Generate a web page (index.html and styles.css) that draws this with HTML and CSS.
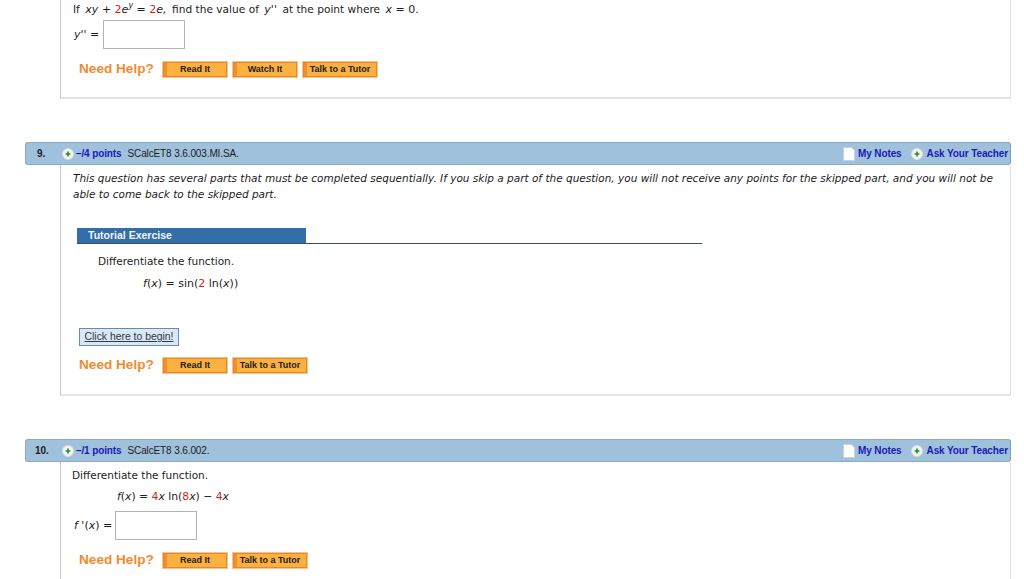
FILE: index.html
```html
<!doctype html>
<html lang="en-us">
  <head>
    <meta charset="utf-8">
    <title>Assignment</title>
    <link rel="stylesheet" href="styles.css">
  </head>
  <body>
    <div class="page">

      <div class="qbody first">
        <p class="line"><span class="gap if">If</span> <i>xy</i> + <b class="red">2</b><i>e<sup>y</sup></i> = <b class="red">2</b><i>e,</i> <span class="gap">find the value of</span> <i>y''</i> <span class="gap">at the point where</span> <i>x</i> = 0.</p>
        <div class="answer a-first"><span class="lbl"><i>y''</i> =</span><span class="box"></span></div>
        <div class="help">
          <span class="need">Need Help?</span>
          <a class="btn w66">Read It</a>
          <a class="btn w66">Watch It</a>
          <a class="btn w76">Talk to a Tutor</a>
        </div>
      </div>

      <div class="qhead q9">
        <span class="num">9.</span>
        <svg class="plus" width="14" height="14" viewBox="0 0 14 14"><circle cx="7" cy="7" r="5.5" fill="#f4f4f0" stroke="#d5dde0"/><path d="M4.6 7h4.8M7 4.6v4.8" stroke="#2c8a2c" stroke-width="1.6"/></svg>
        <span class="pts">–/4 points</span>
        <span class="code">SCalcET8 3.6.003.MI.SA.</span>
        <span class="right">
          <svg class="note" width="12" height="14" viewBox="0 0 12 14"><path d="M.5.5h8l3 3v10H.5z" fill="#fff" stroke="#c6d3de"/></svg>
          <span class="link">My Notes</span>
          <svg class="plus p2" width="14" height="14" viewBox="0 0 14 14"><circle cx="7" cy="7" r="5.5" fill="#f4f4f0" stroke="#d5dde0"/><path d="M4.6 7h4.8M7 4.6v4.8" stroke="#2c8a2c" stroke-width="1.6"/></svg>
          <span class="link">Ask Your Teacher</span>
        </span>
      </div>
      <div class="qbody second">
        <p class="intro"><i>This question has several parts that must be completed sequentially. If you skip a part of the question, you will not receive any points for the skipped part, and you will not be able to come back to the skipped part.</i></p>
        <div class="tut"><span class="tut-title">Tutorial Exercise</span></div>
        <p class="diff">Differentiate the function.</p>
        <p class="fn"><i>f</i>(<i>x</i>) = sin(<span class="red">2</span> ln(<i>x</i>))</p>
        <a class="begin">Click here to begin!</a>
        <div class="help h9">
          <span class="need">Need Help?</span>
          <a class="btn w66">Read It</a>
          <a class="btn w76">Talk to a Tutor</a>
        </div>
      </div>

      <div class="qhead q10">
        <span class="num">10.</span>
        <svg class="plus" width="14" height="14" viewBox="0 0 14 14"><circle cx="7" cy="7" r="5.5" fill="#f4f4f0" stroke="#d5dde0"/><path d="M4.6 7h4.8M7 4.6v4.8" stroke="#2c8a2c" stroke-width="1.6"/></svg>
        <span class="pts">–/1 points</span>
        <span class="code">SCalcET8 3.6.002.</span>
        <span class="right">
          <svg class="note" width="12" height="14" viewBox="0 0 12 14"><path d="M.5.5h8l3 3v10H.5z" fill="#fff" stroke="#c6d3de"/></svg>
          <span class="link">My Notes</span>
          <svg class="plus p2" width="14" height="14" viewBox="0 0 14 14"><circle cx="7" cy="7" r="5.5" fill="#f4f4f0" stroke="#d5dde0"/><path d="M4.6 7h4.8M7 4.6v4.8" stroke="#2c8a2c" stroke-width="1.6"/></svg>
          <span class="link">Ask Your Teacher</span>
        </span>
      </div>
      <div class="qbody third">
        <p class="diff3">Differentiate the function.</p>
        <p class="fn2"><i>f</i>(<i>x</i>) = <span class="red">4</span><i>x</i> ln(<span class="red">8</span><i>x</i>) − <span class="red">4</span><i>x</i></p>
        <div class="answer a-third"><span class="lbl"><i>f '</i>(<i>x</i>) =</span><span class="box"></span></div>
        <div class="help h10">
          <span class="need">Need Help?</span>
          <a class="btn w66">Read It</a>
          <a class="btn w76">Talk to a Tutor</a>
        </div>
      </div>

    </div>
  </body>
</html>
```
FILE: styles.css
```css
html, body
{
	margin: 0;
	padding: 0;
	background-color: #fff;
	overflow: hidden;
}

body
{
	height: 579px;
	font-family: "DejaVu Sans", Verdana, sans-serif;
	font-size: 11px;
	color: #1c1c1c;
}

p
{
	margin: 0;
}

.page
{
	width: 986px;
	margin-left: 25px;
}

.red
{
	color: #e01b1b;
	font-weight: normal;
}

sup
{
	font-size: 8px;
	line-height: 0;
}

.gap
{
	padding: 0 2px;
	font-size: 10.6px;
}

.if
{
	padding: 0 2px 0 0;
}

/* question header bar */
.qhead
{
	display: flex;
	align-items: center;
	height: 21px;
	background-color: #9fc1dc;
	border: 1px solid #8aa9c2;
	border-right-color: #7f9db5;
	border-radius: 3px;
	font-family: "Liberation Sans", Arial, sans-serif;
	font-size: 10px;
	letter-spacing: -0.12px;
}

.q9, .q10
{
	margin-top: 43px;
}

.num
{
	width: 35px;
	padding-left: 11px;
	box-sizing: border-box;
	font-weight: bold;
}

.q10 .num
{
	padding-left: 9px;
}

.plus
{
	flex: none;
}

.pts
{
	margin-left: 1px;
	font-weight: bold;
	color: #1a1ab8;
}

.code
{
	margin-left: 6px;
}

.right
{
	display: flex;
	align-items: center;
	margin-left: auto;
	padding-right: 2px;
	color: #1a1ab8;
	font-weight: bold;
}

.note
{
	margin-right: 3px;
}

.p2
{
	margin-left: 8px;
	margin-right: 3px;
}

/* question body */
.qbody
{
	margin-left: 35px;
	padding-left: 12px;
	border-left: 1px solid #c8c8c8;
	border-right: 1px solid #e0e0e0;
	border-bottom: 2px solid #e4e4e4;
	box-sizing: border-box;
	line-height: 16px;
}

.first
{
	height: 99px;
	padding-top: 1px;
}

.second
{
	height: 231px;
	padding-top: 5px;
	font-size: 10.5px;
}

.third
{
	height: 131px;
	border-bottom: 0;
	padding-top: 5px;
}

.intro
{
	padding-right: 15px;
}

.answer
{
	display: flex;
	align-items: center;
}

.a-first
{
	margin-top: 2px;
	margin-left: -1px;
}

.a-third
{
	margin-top: 6px;
	margin-left: -1px;
}

.a-third .lbl
{
	margin-right: 3px;
}

.lbl
{
	margin-left: 2px;
	margin-right: 4px;
}

.box
{
	display: block;
	width: 80px;
	height: 27px;
	background-color: #fff;
	border: 1px solid #b4b4b4;
}

/* need help row */
.help
{
	display: flex;
	align-items: center;
	margin-left: 6px;
	margin-top: 11px;
	height: 18px;
}

.need
{
	width: 83px;
	font-family: "Liberation Sans", Arial, sans-serif;
	font-size: 13.6px;
	font-weight: bold;
	color: #f28a2e;
	white-space: nowrap;
}

.btn
{
	display: block;
	box-sizing: border-box;
	height: 17px;
	margin-right: 4px;
	background-color: #fbb040;
	border: 1px solid #f3c48c;
	box-shadow: inset 0 0 0 1px #e8862c, inset 3px 0 0 1px #f08f30;
	font-family: "Liberation Sans", Arial, sans-serif;
	font-size: 9px;
	font-weight: bold;
	line-height: 15px;
	text-align: center;
	color: #222;
	white-space: nowrap;
}

.w66
{
	width: 66px;
}

.w76
{
	width: 76px;
}

/* tutorial block */
.tut
{
	margin-top: 26px;
	margin-left: 4px;
	width: 625px;
	height: 16px;
	border-bottom: 1px solid #33506e;
	box-sizing: border-box;
}

.tut-title
{
	display: block;
	width: 229px;
	height: 15px;
	padding-left: 11px;
	box-sizing: border-box;
	background-color: #336ea8;
	color: #f4f4f4;
	font-family: "Liberation Sans", Arial, sans-serif;
	font-size: 10.5px;
	font-weight: bold;
	line-height: 15px;
}

.diff
{
	margin-top: 9px;
	margin-left: 25px;
}

.fn
{
	margin-top: 7px;
	margin-left: 70px;
	font-size: 11px;
}

.begin
{
	display: block;
	width: 100px;
	height: 18px;
	margin-top: 36px;
	margin-left: 6px;
	box-sizing: border-box;
	background-color: #dbe7f3;
	border: 1px solid #5f8db5;
	font-family: "Liberation Sans", Arial, sans-serif;
	font-size: 10.4px;
	line-height: 16px;
	text-align: center;
	text-decoration: underline;
	color: #2c3a4a;
}

.h9
{
	margin-top: 10px;
}

.diff3
{
	margin-left: -1px;
	font-size: 10.5px;
}

.fn2
{
	margin-top: 6px;
	margin-left: 44px;
	font-size: 10.8px;
}

.h10
{
	margin-top: 11px;
}
```
